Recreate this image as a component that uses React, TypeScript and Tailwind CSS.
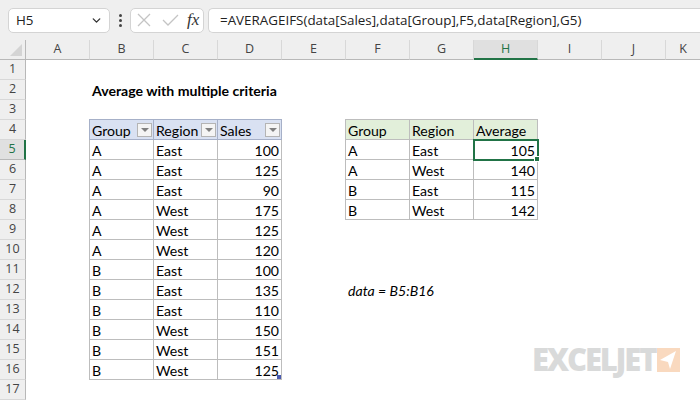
import { ChevronDown } from 'lucide-react';

const columns = ['A', 'B', 'C', 'D', 'E', 'F', 'G', 'H', 'I', 'J', 'K'];

const salesRows = [
  ['A', 'East', '100'],
  ['A', 'East', '125'],
  ['A', 'East', '90'],
  ['A', 'West', '175'],
  ['A', 'West', '125'],
  ['A', 'West', '120'],
  ['B', 'East', '100'],
  ['B', 'East', '135'],
  ['B', 'East', '110'],
  ['B', 'West', '150'],
  ['B', 'West', '151'],
  ['B', 'West', '125'],
];

const summaryRows = [
  ['A', 'East', '105'],
  ['A', 'West', '140'],
  ['B', 'East', '115'],
  ['B', 'West', '142'],
];

function FilterButton() {
  return (
    <span className="absolute right-[1px] bottom-[2px] flex h-[14px] w-[15px] items-center justify-center border border-[#b4b4b4] bg-[#f4f4f4]">
      <span className="h-0 w-0 border-x-[4px] border-t-[4px] border-x-transparent border-t-[#808080]" />
    </span>
  );
}

function Cell({ children, className = '' }: { children?: React.ReactNode; className?: string }) {
  return <div className={`relative h-5 truncate px-[2px] leading-[21px] ${className}`}>{children}</div>;
}

function cellFor(col: number, row: number) {
  const line = 'border-r border-b border-[#bdbdbd]';
  if (row === 2 && col === 1) {
    return <Cell className="overflow-visible font-bold whitespace-nowrap">Average with multiple criteria</Cell>;
  }
  if (row === 4 && col >= 1 && col <= 3) {
    const first = col === 1 ? 'border-l -ml-px' : '';
    return (
      <Cell className={`overflow-visible border-y border-r border-[#a6b0c8] bg-[#d9e1f2] -mt-px h-[21px] ${first}`}>
        {['Group', 'Region', 'Sales'][col - 1]}
        <FilterButton />
      </Cell>
    );
  }
  if (row >= 5 && row <= 16 && col >= 1 && col <= 3) {
    const value = salesRows[row - 5][col - 1];
    const first = col === 1 ? 'border-l border-l-[#bdbdbd] -ml-px' : '';
    return (
      <Cell className={`overflow-visible ${line} ${first} ${col === 3 ? 'text-right' : ''}`}>
        {value}
        {row === 16 && col === 3 && <span className="absolute right-0 bottom-0 h-[4px] w-[4px] bg-[#4a5bb0]" />}
      </Cell>
    );
  }
  if (row === 4 && col >= 5 && col <= 7) {
    const first = col === 5 ? 'border-l -ml-px' : '';
    return (
      <Cell className={`border-y border-r border-[#bdbdbd] bg-[#e2efda] -mt-px h-[21px] ${first}`}>
        {['Group', 'Region', 'Average'][col - 5]}
      </Cell>
    );
  }
  if (row >= 5 && row <= 8 && col >= 5 && col <= 7) {
    const value = summaryRows[row - 5][col - 5];
    const first = col === 5 ? 'border-l border-l-[#bdbdbd] -ml-px' : '';
    return <Cell className={`${line} ${first} ${col === 7 ? 'text-right' : ''}`}>{value}</Cell>;
  }
  if (row === 12 && col === 5) {
    return <Cell className="overflow-visible whitespace-nowrap italic">data = B5:B16</Cell>;
  }
  return <Cell />;
}

export default function App() {
  const rows = Array.from({ length: 17 }, (_, i) => i + 1);

  return (
    <div className="relative h-[400px] w-[700px] overflow-hidden bg-white font-['Lato',sans-serif] text-[14.1px] text-black">
      {/* Formula bar */}
      <div className="flex h-10 items-center bg-[#efefef] font-['Open_Sans',sans-serif]">
        <div className="ml-2 flex h-[25px] w-[102px] items-center justify-between rounded-[5px] border border-[#d4d4d4] bg-white pr-[6px] pl-[7px] text-[13.4px] text-[#222]">
          H5
          <ChevronDown size={13} strokeWidth={2.5} className="text-[#333]" />
        </div>
        <div className="ml-[8px] flex w-[4px] flex-col items-center gap-[2px]">
          <span className="h-[3px] w-[3px] rounded-full bg-[#444]" />
          <span className="h-[3px] w-[3px] rounded-full bg-[#444]" />
          <span className="h-[3px] w-[3px] rounded-full bg-[#444]" />
        </div>
        <div className="ml-[8px] flex h-[25px] w-[74px] items-center rounded-[5px] border border-[#d4d4d4] bg-white pl-[6px]">
          <svg width="14" height="14" viewBox="0 0 14 14" fill="none" stroke="#c4c4c4" strokeWidth="1.3">
            <path d="M1 1l12 12M13 1L1 13" />
          </svg>
          <svg className="ml-[11px]" width="17" height="14" viewBox="0 0 17 14" fill="none" stroke="#c4c4c4" strokeWidth="1.3">
            <path d="M1 7l5 5L16 2" />
          </svg>
          <span className="ml-[8px] font-['Liberation_Serif',serif] text-[17px] italic text-[#333]">fx</span>
        </div>
        <div className="ml-[4px] flex h-[25px] flex-1 items-center rounded-l-[5px] border-y border-l border-[#d4d4d4] bg-white pl-[11px] text-[13.4px] whitespace-nowrap text-[#222]">
          =AVERAGEIFS(data[Sales],data[Group],F5,data[Region],G5)
        </div>
      </div>

      {/* Sheet */}
      <div className="grid grid-cols-[26px_repeat(10,64px)_34px] font-['Lato',sans-serif]">
        <div className="flex h-5 items-end justify-end border-r border-b border-[#b8b8b8] bg-[#efefef] p-[3px]">
          <span className="h-0 w-0 border-b-[12px] border-l-[12px] border-b-[#d4d4d4] border-l-transparent" />
        </div>
        {columns.map((col, i) => (
          <div
            key={col}
            className={`flex h-5 items-center justify-center border-b font-['Open_Sans',sans-serif] text-[12.5px] ${
              col === 'H'
                ? 'border-b-2 border-b-[#217346] bg-[#e0e0e0] text-[#217346]'
                : 'border-b-[#b8b8b8] bg-[#efefef] text-[#444]'
            } ${i < 10 ? 'border-r border-r-[#d8d8d8]' : ''}`}
          >
            {col}
          </div>
        ))}
        {rows.map((row) => (
          <div key={row} className="contents">
            <div
              className={`flex h-5 items-center justify-center border-b font-['Open_Sans',sans-serif] text-[12.5px] ${
                row === 5
                  ? 'border-r-2 border-b-[#b8b8b8] border-r-[#217346] bg-[#e0e0e0] text-[#217346]'
                  : 'border-r border-b-[#d8d8d8] border-r-[#b8b8b8] bg-[#efefef] text-[#444]'
              }`}
            >
              {row}
            </div>
            {columns.map((_, col) => (
              <div key={col}>{cellFor(col, row)}</div>
            ))}
          </div>
        ))}
      </div>

      {/* Active cell */}
      <div className="absolute top-[139px] left-[473px] h-[22px] w-[66px] border-2 border-[#217346]">
        <span className="absolute -right-[3px] -bottom-[3px] h-[6px] w-[6px] border border-white bg-[#217346]" />
      </div>

      {/* Watermark logo */}
      <div className="absolute top-[348px] left-[532px] flex items-start">
        <span className="font-['Open_Sans',sans-serif] text-[31px] leading-[23px] font-extrabold tracking-[-2.2px] text-[#d9dada]">
          EXCELJET
        </span>
        <svg className="absolute top-0 left-[125px]" width="23" height="24" viewBox="0 0 23 24">
          <rect width="23" height="24" fill="#f9d9bf" />
          <path d="M3 12L19 3L13 21L11 14Z" fill="#fff" />
        </svg>
      </div>
    </div>
  );
}
